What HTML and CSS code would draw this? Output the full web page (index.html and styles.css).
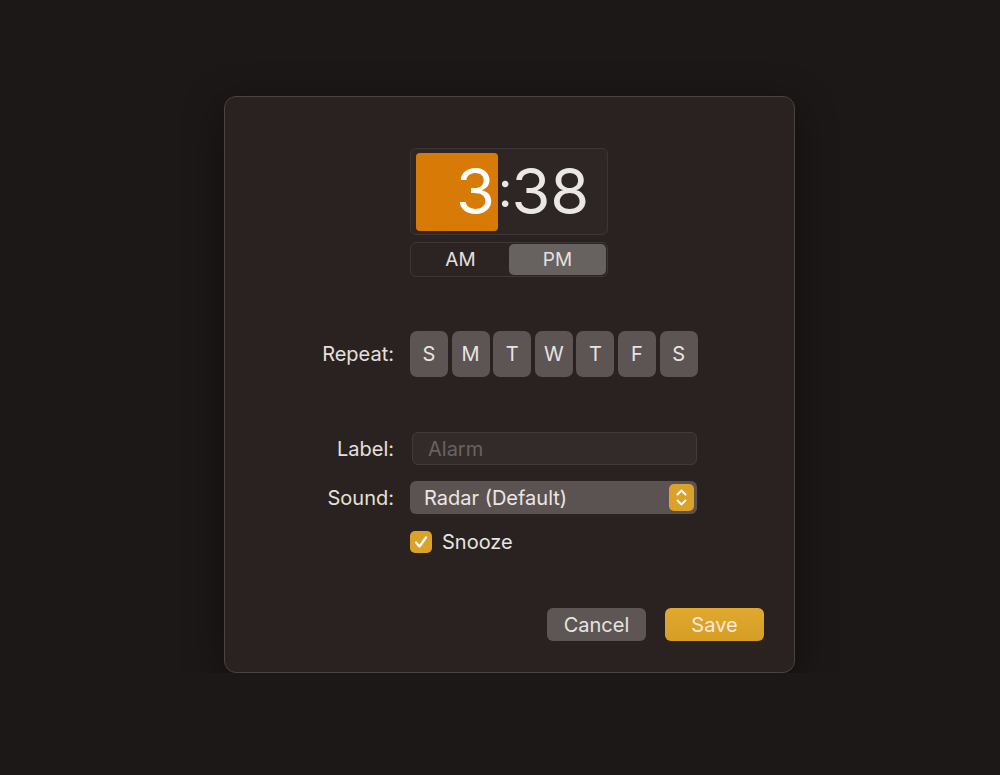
FILE: index.html
```html
<!DOCTYPE html>
<html>
    <head>
        <meta charset="utf-8">
        <title>Edit Alarm</title>
        <link rel="stylesheet" href="styles.css">
    </head>
    <body>
        <div class="dialog">
            <div class="form_row">
                <div></div>
                <div class="time_picker">
                    <div class="time_box">
                        <span class="hour">3</span>
                        <span class="colon">:</span>
                        <span class="minute">38</span>
                    </div>
                    <div class="ampm">
                        <div class="seg">AM</div>
                        <div class="seg selected">PM</div>
                    </div>
                </div>
            </div>

            <div class="form_row repeat_row">
                <div class="row_label">Repeat:</div>
                <div class="days">
                    <div class="day">S</div>
                    <div class="day">M</div>
                    <div class="day">T</div>
                    <div class="day">W</div>
                    <div class="day">T</div>
                    <div class="day">F</div>
                    <div class="day">S</div>
                </div>
            </div>

            <div class="form_row label_row">
                <div class="row_label">Label:</div>
                <div class="text_field">Alarm</div>
            </div>

            <div class="form_row sound_row">
                <div class="row_label">Sound:</div>
                <div class="popup">
                    <span>Radar (Default)</span>
                    <span class="stepper">
                        <svg width="25" height="27" viewBox="0 0 25 27">
                            <path d="M8.5 10.5 L12.5 6.5 L16.5 10.5" fill="none" stroke="#fff" stroke-width="1.8" stroke-linecap="round" stroke-linejoin="round"/>
                            <path d="M8.5 16.5 L12.5 20.5 L16.5 16.5" fill="none" stroke="#fff" stroke-width="1.8" stroke-linecap="round" stroke-linejoin="round"/>
                        </svg>
                    </span>
                </div>
            </div>

            <div class="form_row snooze_row">
                <div></div>
                <div class="check_wrap">
                    <span class="checkbox">
                        <svg width="22" height="22" viewBox="0 0 22 22">
                            <path d="M6 11.5 L9.5 15.5 L16 6.5" fill="none" stroke="#fff" stroke-width="2.2" stroke-linecap="round" stroke-linejoin="round"/>
                        </svg>
                    </span>
                    <span>Snooze</span>
                </div>
            </div>

            <div class="buttons">
                <div class="btn cancel">Cancel</div>
                <div class="btn save">Save</div>
            </div>
        </div>
    </body>
</html>
```

FILE: styles.css
```css
* {
    box-sizing: border-box;
}

body {
    margin: 0;
    background-color: #1c1817;
    font-family: Inter, "Noto Sans", sans-serif;
    color: #e4e0de;
}

.dialog {
    width: 571px;
    height: 577px;
    margin: 96px 0 0 224px;
    padding: 51px 30px 0 0;
    border: 1px solid #4a4341;
    border-radius: 12px;
    background-color: #2a2220;
    box-shadow: 0 10px 40px rgba(0, 0, 0, 0.45);
    display: flex;
    flex-direction: column;
}

.form_row {
    display: grid;
    grid-template-columns: 169px 1fr;
    column-gap: 16px;
    align-items: center;
}

.row_label {
    text-align: right;
    font-size: 20px;
    color: #e4e0de;
}

/* time */
.time_picker {
    display: flex;
    flex-direction: column;
    gap: 7px;
    width: 198px;
}

.time_box {
    height: 87px;
    border: 1px solid #3e3634;
    border-radius: 6px;
    background-color: #2e2624;
    padding: 4px 5px;
    display: flex;
    align-items: center;
    font-size: 63px;
    font-weight: 400;
    color: #ebe7e5;
    line-height: 1;
}

.time_box .hour {
    width: 82px;
    height: 78px;
    background-color: #d87b06;
    border-radius: 4px;
    color: #fff;
    padding-right: 3px;
    display: flex;
    align-items: center;
    justify-content: flex-end;
}

.time_box .colon {
    font-size: 50px;
    margin: 0 -1px 6px 0;
}

.ampm {
    height: 35px;
    border: 1px solid #3e3634;
    border-radius: 6px;
    background-color: #2c2422;
    padding: 1px;
    display: flex;
}

.ampm .seg {
    flex: 1;
    display: flex;
    align-items: center;
    justify-content: center;
    font-size: 19px;
    color: #e4e0de;
    border-radius: 5px;
}

.ampm .selected {
    background-color: #676160;
}

/* repeat */
.repeat_row {
    margin-top: 54px;
}

.days {
    display: flex;
    gap: 3.6px;
}

.day {
    width: 38px;
    height: 46px;
    border-radius: 7px;
    background-color: #5d5553;
    display: flex;
    align-items: center;
    justify-content: center;
    font-size: 20px;
    color: #e8e4e2;
}

/* label + sound */
.label_row {
    margin-top: 55px;
}

.text_field {
    width: 285px;
    height: 33px;
    margin-left: 2px;
    border: 1px solid #433b39;
    border-radius: 6px;
    background-color: #332b29;
    padding-left: 15px;
    display: flex;
    align-items: center;
    font-size: 20px;
    color: #6a6260;
}

.sound_row {
    margin-top: 16px;
}

.popup {
    width: 287px;
    height: 33px;
    border-radius: 6px;
    background-color: #5b5351;
    padding: 0 3px 0 14px;
    display: flex;
    align-items: center;
    justify-content: space-between;
    font-size: 20px;
    color: #ebe7e5;
}

.stepper {
    width: 25px;
    height: 27px;
    border-radius: 5px;
    background-color: #dba22a;
    display: flex;
}

.snooze_row {
    margin-top: 16px;
}

.check_wrap {
    display: flex;
    align-items: center;
    gap: 10px;
    font-size: 20px;
    color: #e8e4e2;
}

.checkbox {
    width: 22px;
    height: 22px;
    border-radius: 5px;
    background-color: #dba22a;
    display: flex;
}

/* buttons */
.buttons {
    margin-top: 54px;
    display: flex;
    justify-content: flex-end;
    gap: 19px;
}

.btn {
    width: 99px;
    height: 33px;
    border-radius: 6px;
    display: flex;
    align-items: center;
    justify-content: center;
    font-size: 20px;
}

.cancel {
    background-color: #5d5654;
    color: #e8e4e2;
}

.save {
    background: linear-gradient(#e0a92e, #d79d25);
    color: #f6ecd8;
}
```
